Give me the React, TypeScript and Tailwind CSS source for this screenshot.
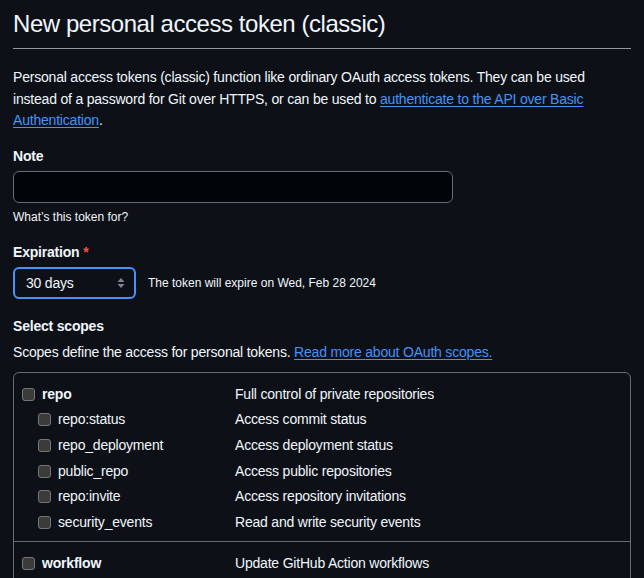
const scopes = [
  {
    name: "repo",
    description: "Full control of private repositories",
    children: [
      { name: "repo:status", description: "Access commit status" },
      { name: "repo_deployment", description: "Access deployment status" },
      { name: "public_repo", description: "Access public repositories" },
      { name: "repo:invite", description: "Access repository invitations" },
      { name: "security_events", description: "Read and write security events" },
    ],
  },
  {
    name: "workflow",
    description: "Update GitHub Action workflows",
    children: [],
  },
]

function Checkbox() {
  return <span className="inline-block w-[13px] h-[13px] rounded-[3px] bg-[#3b3b3b] border border-[#767676] shrink-0" />
}

function SelectArrows() {
  return (
    <svg width="8" height="12" viewBox="0 0 8 12" className="shrink-0">
      <path d="M4 1 L7.5 5 L0.5 5 Z" fill="#7d8590" />
      <path d="M4 11 L7.5 7 L0.5 7 Z" fill="#7d8590" />
    </svg>
  )
}

export default function App() {
  return (
    <div
      className="min-h-[578px] bg-[#0d1117] text-[#f0f6fc] px-[13px] tracking-[-0.2px]"
      style={{ fontFamily: '"Liberation Sans", Arial, sans-serif' }}
    >
      <h2 className="text-[24px] leading-[36px] pt-[6px] pb-[6px] border-b border-[#9198a1] font-normal tracking-[-0.45px]">
        New personal access token (classic)
      </h2>

      <p className="mt-[18px] text-[14px] leading-[21.5px] pr-[10px]">
        Personal access tokens (classic) function like ordinary OAuth access tokens. They can be used instead of a
        password for Git over HTTPS, or can be used to{" "}
        <a className="text-[#4493f8] underline underline-offset-2">authenticate to the API over Basic Authentication</a>.
      </p>

      <div className="mt-[14px]">
        <div className="text-[14px] leading-[21px] font-semibold">Note</div>
        <div className="mt-[4px] w-[440px] h-[32px] rounded-[6px] border border-[#656c76] bg-[#010409]" />
        <div className="mt-[5px] text-[12px] leading-[18px] tracking-normal">What’s this token for?</div>
      </div>

      <div className="mt-[16px]">
        <div className="text-[14px] leading-[21px] font-semibold">
          Expiration <span className="text-[#f85149]">*</span>
        </div>
        <div className="mt-[4px] flex items-center gap-[12px]">
          <div className="w-[123px] h-[32px] rounded-[6px] border-2 border-[#4493f8] bg-[#0d1117] flex items-center justify-between pl-[11px] pr-[9px]">
            <span className="text-[14px] pt-[1px]">30 days</span>
            <SelectArrows />
          </div>
          <span className="text-[12px] pt-[1px] tracking-normal">The token will expire on Wed, Feb 28 2024</span>
        </div>
      </div>

      <div className="mt-[17px]">
        <div className="text-[14px] leading-[21px] font-semibold">Select scopes</div>
        <p className="mt-[5px] text-[14px] leading-[21px]">
          Scopes define the access for personal tokens.{" "}
          <a className="text-[#4493f8] underline underline-offset-2">Read more about OAuth scopes.</a>
        </p>
      </div>

      <div className="mt-[9px] border border-[#656c76] rounded-[6px] text-[14px]">
        {scopes.map((scope, i) => (
          <div key={scope.name} className={i > 0 ? "border-t border-[#656c76] pt-[9px] pb-[6px]" : "pt-[9px] pb-[6px]"}>
            <div className="flex items-center h-[25.6px] pl-[8px]">
              <div className="w-[213px] flex items-center gap-[7px]">
                <Checkbox />
                <span className="font-semibold">{scope.name}</span>
              </div>
              <span>{scope.description}</span>
            </div>
            {scope.children.map((child) => (
              <div key={child.name} className="flex items-center h-[25.6px] pl-[24px]">
                <div className="w-[197px] flex items-center gap-[7px]">
                  <Checkbox />
                  <span>{child.name}</span>
                </div>
                <span>{child.description}</span>
              </div>
            ))}
          </div>
        ))}
      </div>
    </div>
  )
}
